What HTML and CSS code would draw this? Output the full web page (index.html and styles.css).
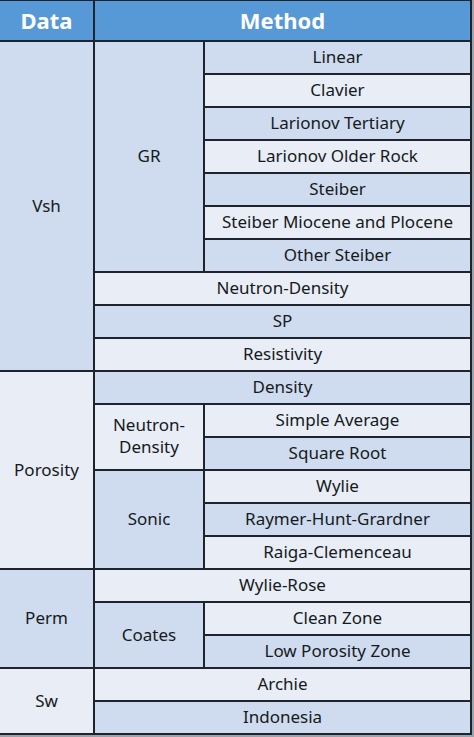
FILE: index.html
```html
<!DOCTYPE html>
<html>
<head>
<meta charset="utf-8">
<link rel="stylesheet" href="styles.css">
</head>
<body>
<div class="table">
  <div class="cell head c1" style="grid-row:1">Data</div>
  <div class="cell head c23" style="grid-row:1">Method</div>

  <div class="cell blue c1" style="grid-row:2 / span 10">Vsh</div>
  <div class="cell blue c2" style="grid-row:2 / span 7">GR</div>
  <div class="cell blue c3" style="grid-row:2">Linear</div>
  <div class="cell light c3" style="grid-row:3">Clavier</div>
  <div class="cell blue c3" style="grid-row:4">Larionov Tertiary</div>
  <div class="cell light c3" style="grid-row:5">Larionov Older Rock</div>
  <div class="cell blue c3" style="grid-row:6">Steiber</div>
  <div class="cell light c3" style="grid-row:7">Steiber Miocene and Plocene</div>
  <div class="cell blue c3" style="grid-row:8">Other Steiber</div>
  <div class="cell light c23" style="grid-row:9">Neutron-Density</div>
  <div class="cell blue c23" style="grid-row:10">SP</div>
  <div class="cell light c23" style="grid-row:11">Resistivity</div>

  <div class="cell light c1" style="grid-row:12 / span 6">Porosity</div>
  <div class="cell blue c23" style="grid-row:12">Density</div>
  <div class="cell light c2 two" style="grid-row:13 / span 2">Neutron-<br>Density</div>
  <div class="cell light c3" style="grid-row:13">Simple Average</div>
  <div class="cell blue c3" style="grid-row:14">Square Root</div>
  <div class="cell blue c2" style="grid-row:15 / span 3">Sonic</div>
  <div class="cell light c3" style="grid-row:15">Wylie</div>
  <div class="cell blue c3" style="grid-row:16">Raymer-Hunt-Grardner</div>
  <div class="cell light c3" style="grid-row:17">Raiga-Clemenceau</div>

  <div class="cell blue c1" style="grid-row:18 / span 3">Perm</div>
  <div class="cell light c23" style="grid-row:18">Wylie-Rose</div>
  <div class="cell blue c2" style="grid-row:19 / span 2">Coates</div>
  <div class="cell light c3" style="grid-row:19">Clean Zone</div>
  <div class="cell blue c3" style="grid-row:20">Low Porosity Zone</div>

  <div class="cell light c1" style="grid-row:21 / span 2">Sw</div>
  <div class="cell light c23" style="grid-row:21">Archie</div>
  <div class="cell blue c23" style="grid-row:22">Indonesia</div>
</div>
</body>
</html>
```
FILE: styles.css
```css
html, body {
  margin: 0;
  padding: 0;
  background: #9da3ab;
}
body {
  width: 474px;
  height: 737px;
  overflow: hidden;
}
.table {
  width: 472px;
  display: grid;
  grid-template-columns: 93px 108px 1fr;
  grid-template-rows: 39px repeat(21, 31px);
  gap: 2px;
  background: #1d242e;
  padding: 1px 2px 2px 0;
  box-sizing: border-box;
  font-family: "Noto Sans", "Open Sans", sans-serif;
  font-size: 17px;
  color: #161a20;
}
.cell {
  display: flex;
  align-items: center;
  justify-content: center;
  text-align: center;
  padding-bottom: 2px;
  box-sizing: border-box;
}
.c1 { grid-column: 1; }
.c2 { grid-column: 2; }
.c3 { grid-column: 3; }
.c23 { grid-column: 2 / 4; }
.head {
  background: #5799d6;
  color: #ffffff;
  font-weight: 700;
  font-size: 22px;
}
.blue { background: #cfdbee; }
.light { background: #e8edf6; }
.two { line-height: 22px; }
```
